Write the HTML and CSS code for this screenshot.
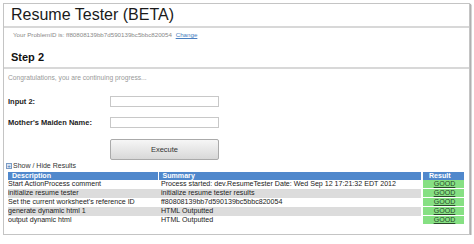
FILE: index.html
```html
<!DOCTYPE html>
<html>
<head>
<meta charset="utf-8">
<link rel="stylesheet" href="styles.css">
</head>
<body>
<div class="frame">
  <div class="title-bar"><h1 class="title">Resume Tester (BETA)</h1></div>
  <div class="pid">Your ProblemID is: ff80808139bb7d590139bc5bbc820054 <a class="change" href="#">Change</a></div>
  <div class="step-bar"><h2 class="step">Step 2</h2></div>
  <div class="content">
    <p class="congrats">Congratulations, you are continuing progress...</p>
    <div class="form">
      <label class="label">Input 2:</label>
      <input class="field" type="text">
      <label class="label">Mother's Maiden Name:</label>
      <input class="field" type="text">
      <span></span>
      <button class="exec">Execute</button>
    </div>
    <div class="toggle"><span class="plus">+</span>Show / Hide Results</div>
    <table class="results">
      <thead>
        <tr><th class="c-desc">Description</th><th class="c-sum">Summary</th><th class="c-res">Result</th></tr>
      </thead>
      <tbody>
        <tr><td>Start ActionProcess comment</td><td>Process started: dev.ResumeTester Date: Wed Sep 12 17:21:32 EDT 2012</td><td class="good"><a href="#">GOOD</a></td></tr>
        <tr class="alt"><td>initialize resume tester</td><td>initialize resume tester results</td><td class="good"><a href="#">GOOD</a></td></tr>
        <tr><td>Set the current worksheet's reference ID</td><td>ff80808139bb7d590139bc5bbc820054</td><td class="good"><a href="#">GOOD</a></td></tr>
        <tr class="alt"><td>generate dynamic html 1</td><td>HTML Outputted</td><td class="good"><a href="#">GOOD</a></td></tr>
        <tr><td>output dynamic html</td><td>HTML Outputted</td><td class="good"><a href="#">GOOD</a></td></tr>
      </tbody>
    </table>
  </div>
</div>
</body>
</html>
```
FILE: styles.css
```css
* { box-sizing: border-box; }
html, body { margin: 0; padding: 0; background: #fff; }
body { font-family: "Liberation Sans", Arial, sans-serif; color: #222; }

.frame {
  margin: 3px 0 0 3px;
  width: 467px;
  height: 232px;
  border: 1px solid #c4c4c4;
  box-shadow: 1px 1px 1px #b0b0b0, 2px 2px 0 #ddd;
}

.title-bar {
  height: 24px;
  padding: 2px 0 0 7px;
  border-bottom: 2px solid #d8d8d8;
}
.title {
  margin: 0;
  font-size: 16px;
  line-height: 18px;
  font-weight: normal;
  color: #1a1a1a;
}

.pid {
  height: 12px;
  padding: 3px 0 0 9px;
  font-size: 6.2px;
  line-height: 7px;
  color: #888;
}
.change { color: #4a7fc0; margin-left: 2px; }

.step-bar {
  height: 29px;
  padding: 11px 0 0 7px;
  border-bottom: 2px solid #d8d8d8;
}
.step {
  margin: 0;
  font-size: 11px;
  line-height: 13px;
  font-weight: bold;
  color: #111;
}

.content { padding: 0 0 0 4px; }

.congrats {
  margin: 0;
  padding-top: 4px;
  height: 14px;
  font-size: 6.7px;
  line-height: 10px;
  color: #999;
}

.form {
  display: grid;
  grid-template-columns: 102px 109px;
  row-gap: 10px;
  align-items: center;
  margin-top: 13px;
}
.label {
  font-size: 7.5px;
  font-weight: bold;
  color: #222;
}
.field {
  height: 11px;
  border: 1px solid #c8c8c8;
  padding: 0;
  margin: 0;
}
.exec {
  height: 21px;
  margin-top: 1px;
  border: 1px solid #aaa;
  border-radius: 2px;
  background: linear-gradient(#f6f6f6, #d8d8d8);
  font-family: "Liberation Sans", Arial, sans-serif;
  font-size: 7.5px;
  color: #333;
  padding: 0;
}

.toggle {
  margin: 1px 0 0 -2px;
  height: 9px;
  display: flex;
  align-items: center;
  font-size: 7px;
  color: #333;
}
.plus {
  display: inline-flex;
  align-items: center;
  justify-content: center;
  width: 6px;
  height: 6px;
  margin-right: 1px;
  border: 1px solid #7b9bc4;
  background: #dbe6f4;
  color: #3a6bb0;
  font-size: 6px;
  line-height: 6px;
}

.results {
  margin-top: 2px;
  width: 456px;
  border-collapse: collapse;
  font-size: 7.1px;
  table-layout: fixed;
}
.results th {
  background: #5088cc;
  color: #fff;
  font-weight: bold;
  text-align: left;
  height: 8px;
  line-height: 8px;
  padding: 0 0 0 4px;
  border-right: 1px solid #fff;
}
.results th.c-res { border-left: 2px solid #fff; border-right: 0; padding-left: 6px; }
.c-desc { width: 150px; }
.c-sum { width: 264px; }
.c-res { width: 42px; }
.results td {
  height: 8px;
  line-height: 8px;
  padding: 0;
  white-space: nowrap;
  overflow: hidden;
  color: #222;
}
.results td:nth-child(2) { padding-left: 3px; }
.results tr.alt td { background: #dcdcdc; }
.results td.good,
.results tr.alt td.good {
  background: #86e083;
  border-left: 2px solid #fff;
  border-bottom: 1px solid #fff;
  text-align: center;
  padding-left: 2px;
}
.good a { color: #2a4a2a; }
```
